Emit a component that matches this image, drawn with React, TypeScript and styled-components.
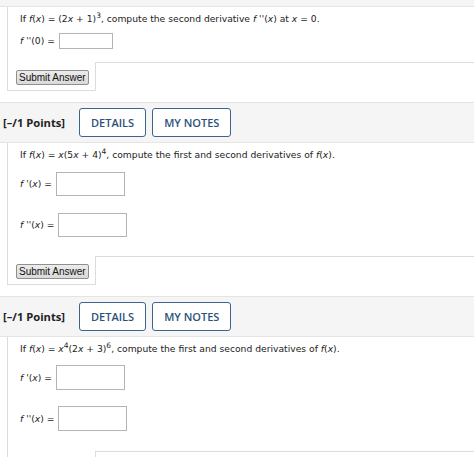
import * as React from 'react';
import styled, { createGlobalStyle } from 'styled-components';

const GlobalStyle = createGlobalStyle`
  html, body {
    margin: 0;
    padding: 0;
    background: #ffffff;
  }
  body {
    font-family: 'DejaVu Sans', Verdana, sans-serif;
    color: #222222;
  }
`;

const Page = styled.div`
  width: 474px;
  overflow: hidden;
`;

const PrevBand = styled.div`
  height: 6px;
  background: #f5f5f5;
  border-bottom: 1px solid #e4e4e4;
`;

const HeaderBand = styled.div`
  display: flex;
  align-items: center;
  height: 39px;
  margin-top: 11px;
  padding-left: 3px;
  background: #f5f5f5;
  border-top: 1px solid #e4e4e4;
  border-bottom: 1px solid #e4e4e4;
`;

const Points = styled.span`
  font-family: 'Open Sans', 'Liberation Sans', sans-serif;
  font-weight: 700;
  font-size: 11.2px;
  color: #222222;
  margin-right: 14px;
`;

const TabButton = styled.button`
  height: 29px;
  padding: 0 11px;
  margin-right: 6px;
  background: #ffffff;
  border: 1.5px solid #3f648b;
  border-radius: 3px;
  font-family: 'Open Sans', 'Liberation Sans', sans-serif;
  font-weight: 600;
  font-size: 11px;
  color: #2b527a;
`;

const Card = styled.div`
  margin-left: 7px;
  border-left: 1px solid #dcdcdc;
`;

const Content = styled.div<{ $gap: number; $pb: number }>`
  display: flex;
  flex-direction: column;
  gap: ${(p) => p.$gap}px;
  padding: 5px 12px ${(p) => p.$pb}px 12px;
`;

const Question = styled.div<{ $after: number }>`
  font-size: 9.2px;
  line-height: 14px;
  margin-bottom: ${(p) => p.$after}px;
  white-space: nowrap;
`;

const AnswerRow = styled.div`
  display: flex;
  align-items: center;
  gap: 4px;
  font-size: 9.2px;
  line-height: 12px;
`;

const AnswerBox = styled.input<{ $w: number; $h: number }>`
  width: ${(p) => p.$w}px;
  height: ${(p) => p.$h}px;
  box-sizing: border-box;
  margin: 0;
  padding: 0;
  border: 1px solid #b4b4b4;
  background: #ffffff;
`;

const Footer = styled.div`
  display: flex;
`;

const SubmitCell = styled.div`
  display: flex;
  align-items: flex-start;
  width: 79px;
  padding: 8px 0 5px 8px;
  border-right: 1px solid #dcdcdc;
  border-bottom: 1px solid #dcdcdc;
`;

const Filler = styled.div`
  flex: 1;
  border-top: 1px solid #dcdcdc;
`;

const SubmitButton = styled.button`
  height: 15px;
  padding: 0 2px;
  font-family: 'Liberation Sans', Arial, sans-serif;
  font-size: 10px;
  line-height: 13px;
  color: #111111;
  background: linear-gradient(#ececec, #d9d9d9);
  border: 1px solid #8f8f8f;
  border-radius: 2px;
  white-space: nowrap;
`;

const V = styled.i`
  font-style: italic;
`;

const Sup = styled.sup`
  font-size: 7.5px;
  line-height: 0;
  vertical-align: 4px;
`;

function Header() {
  return (
    <HeaderBand>
      <Points>[–/1 Points]</Points>
      <TabButton>DETAILS</TabButton>
      <TabButton>MY NOTES</TabButton>
    </HeaderBand>
  );
}

function Submit() {
  return (
    <Footer>
      <SubmitCell>
        <SubmitButton>Submit Answer</SubmitButton>
      </SubmitCell>
      <Filler />
    </Footer>
  );
}

export default function App() {
  return (
    <Page>
      <GlobalStyle />
      <PrevBand />

      <Card>
        <Content $gap={0} $pb={13}>
          <Question $after={7}>
            If <V>f</V>(<V>x</V>) = (2<V>x</V> + 1)<Sup>3</Sup>, compute the second derivative{' '}
            <V>f</V> ''(<V>x</V>) at <V>x</V> = 0.
          </Question>
          <AnswerRow>
            <span>
              <V>f</V> ''(0) =
            </span>
            <AnswerBox $w={54} $h={16} />
          </AnswerRow>
        </Content>
        <Submit />
      </Card>

      <Header />
      <Card>
        <Content $gap={17} $pb={19}>
          <Question $after={-7}>
            If <V>f</V>(<V>x</V>) = <V>x</V>(5<V>x</V> + 4)<Sup>4</Sup>, compute the first and second
            derivatives of <V>f</V>(<V>x</V>).
          </Question>
          <AnswerRow>
            <span>
              <V>f</V> '(<V>x</V>) =
            </span>
            <AnswerBox $w={69} $h={24} />
          </AnswerRow>
          <AnswerRow>
            <span>
              <V>f</V> ''(<V>x</V>) =
            </span>
            <AnswerBox $w={69} $h={24} />
          </AnswerRow>
        </Content>
        <Submit />
      </Card>

      <Header />
      <Card>
        <Content $gap={16} $pb={20}>
          <Question $after={-7}>
            If <V>f</V>(<V>x</V>) = <V>x</V>
            <Sup>4</Sup>(2<V>x</V> + 3)<Sup>6</Sup>, compute the first and second derivatives of{' '}
            <V>f</V>(<V>x</V>).
          </Question>
          <AnswerRow>
            <span>
              <V>f</V> '(<V>x</V>) =
            </span>
            <AnswerBox $w={69} $h={25} />
          </AnswerRow>
          <AnswerRow>
            <span>
              <V>f</V> ''(<V>x</V>) =
            </span>
            <AnswerBox $w={69} $h={25} />
          </AnswerRow>
        </Content>
        <Submit />
      </Card>
    </Page>
  );
}
